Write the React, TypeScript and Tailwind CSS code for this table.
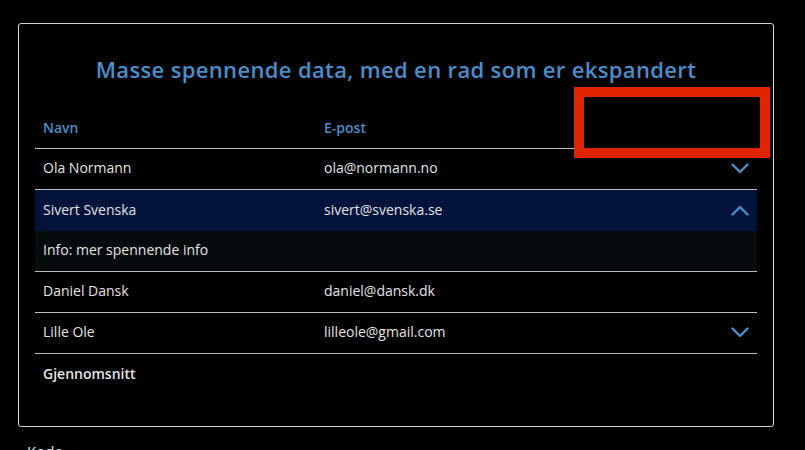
import React from "react";

const font = { fontFamily: '"Open Sans", "Liberation Sans", sans-serif' };

function Chevron({ up }: { up?: boolean }) {
  return (
    <svg width="18" height="11" viewBox="0 0 18 11" fill="none" className="block">
      <path
        d={up ? "M1.5 9.5 L9 2 L16.5 9.5" : "M1.5 1.5 L9 9 L16.5 1.5"}
        stroke="#4a8fcb"
        strokeWidth="2.4"
        strokeLinecap="round"
        strokeLinejoin="round"
      />
    </svg>
  );
}

type Row = { name: string; email: string; chevron?: "up" | "down"; expanded?: boolean };

const rows: Row[] = [
  { name: "Ola Normann", email: "ola@normann.no", chevron: "down" },
  { name: "Sivert Svenska", email: "sivert@svenska.se", chevron: "up", expanded: true },
  { name: "Daniel Dansk", email: "daniel@dansk.dk" },
  { name: "Lille Ole", email: "lilleole@gmail.com", chevron: "down" },
];

export default function App() {
  return (
    <div className="relative w-[805px] h-[450px] overflow-hidden bg-black text-[#e4e4e4]" style={font}>
      <div className="pt-[23px] pl-[18px]">
        <div className="w-[756px] h-[404px] border border-[#d4d4d4] rounded-[3px] px-4">
          <h2 className="pt-[30px] h-[84px] text-center text-[22px] leading-[30px] tracking-[0.35px] text-[#4a8fcb] font-semibold">
            Masse spennende data, med en rad som er ekspandert
          </h2>
          <div className="text-[14px]">
            <div className="flex items-center h-[41px] pb-[2px] border-b border-[#bdbdbd] text-[#4a8fcb] font-semibold">
              <div className="w-[281px] pl-2">Navn</div>
              <div className="flex-1 pl-2">E-post</div>
            </div>
            {rows.map((r) => (
              <React.Fragment key={r.name}>
                <div
                  className={
                    r.expanded
                      ? "flex items-center h-[41px] pb-[3px] bg-[#01133a]"
                      : "flex items-center h-[41px] pb-[3px] border-b border-[#bdbdbd]"
                  }
                >
                  <div className="w-[281px] pl-2">{r.name}</div>
                  <div className="flex-1 pl-2">{r.email}</div>
                  <div className="w-[40px] flex justify-end pr-2 pt-[2px]">
                    {r.chevron ? <Chevron up={r.chevron === "up"} /> : null}
                  </div>
                </div>
                {r.expanded ? (
                  <div className="flex items-center h-[41px] pb-[3px] border-b border-[#bdbdbd] bg-[#050b0c] pl-2">
                    Info: mer spennende info
                  </div>
                ) : null}
              </React.Fragment>
            ))}
            <div className="flex items-center h-[41px] pb-[3px] pl-2 font-semibold">Gjennomsnitt</div>
          </div>
        </div>
      </div>
      <div className="pl-[27px] pt-[14px] text-[15px] leading-[20px] text-[#dfe6ee]">Kode</div>
      <div className="absolute left-[574px] top-[87px] w-[196px] h-[71px] border-[10px] border-[#e02400]" />
    </div>
  );
}
